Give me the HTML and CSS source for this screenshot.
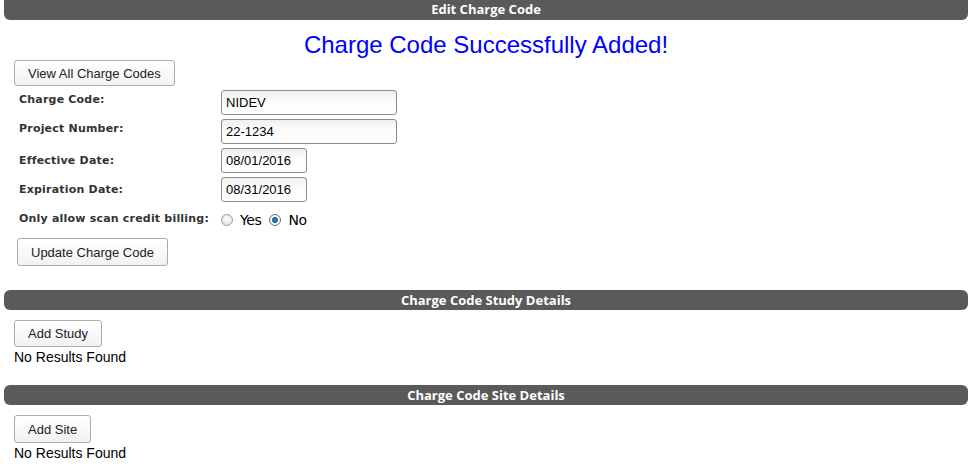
FILE: index.html
```html
<!DOCTYPE html>
<html>
<head>
<meta charset="utf-8">
<title>Edit Charge Code</title>
<link rel="stylesheet" href="styles.css">
</head>
<body>
  <div class="bar bar-top">Edit Charge Code</div>
  <h1 class="title">Charge Code Successfully Added!</h1>
  <button class="btn">View All Charge Codes</button>

  <div class="form">
    <label class="lbl lbl-top">Charge Code:</label>
    <input class="field" type="text" value="NIDEV">
    <label class="lbl lbl-top">Project Number:</label>
    <input class="field" type="text" value="22-1234">
    <label class="lbl">Effective Date:</label>
    <input class="field field-date" type="text" value="08/01/2016">
    <label class="lbl">Expiration Date:</label>
    <input class="field field-date" type="text" value="08/31/2016">
    <label class="lbl">Only allow scan credit billing:</label>
    <div class="radios">
      <label class="opt"><input class="radio" type="radio" name="scan"> Yes</label>
      <label class="opt"><input class="radio" type="radio" name="scan" checked> No</label>
    </div>
  </div>
  <button class="btn btn-update">Update Charge Code</button>

  <div class="bar bar-study">Charge Code Study Details</div>
  <button class="btn btn-sub">Add Study</button>
  <div class="empty">No Results Found</div>

  <div class="bar bar-site">Charge Code Site Details</div>
  <button class="btn btn-sub btn-site">Add Site</button>
  <div class="empty">No Results Found</div>
</body>
</html>
```
FILE: styles.css
```css
* { box-sizing: border-box; }

body {
  margin: 0;
  padding: 0 8px 0 4px;
  font-family: "Liberation Sans", Arial, sans-serif;
  font-size: 14px;
  color: #000;
  background: #fff;
}

.bar {
  height: 20px;
  line-height: 20px;
  background: #5a5a5a;
  border-radius: 6px;
  color: #fff;
  text-align: center;
  font-family: "Open Sans", "DejaVu Sans", sans-serif;
  font-weight: bold;
  font-size: 13px;
}

.bar-top {
  line-height: 19px;
  border-radius: 0 0 6px 6px;
}

.title {
  margin: 11px 0 1px;
  font-family: "Liberation Sans", Arial, sans-serif;
  font-weight: normal;
  font-size: 24px;
  line-height: 28px;
  color: #0000ff;
  text-align: center;
}

.btn {
  display: block;
  margin: 0 0 0 10px;
  height: 26px;
  padding: 0 13px;
  font-family: "Liberation Sans", Arial, sans-serif;
  font-size: 13px;
  color: #222;
  background: linear-gradient(#ffffff, #f2f2f2);
  border: 1px solid #acacac;
  border-radius: 3px;
}

.form {
  display: grid;
  grid-template-columns: 202px auto;
  row-gap: 4px;
  margin: 4px 0 0 15px;
  align-items: center;
}

.lbl {
  font-family: "DejaVu Sans", Verdana, sans-serif;
  font-weight: bold;
  font-size: 11px;
  letter-spacing: 0.2px;
  color: #333;
  align-self: center;
}

.lbl-top {
  align-self: start;
  padding-top: 3px;
}

.field {
  width: 176px;
  height: 25px;
  padding: 0 4px;
  font-family: "Liberation Sans", Tahoma, sans-serif;
  font-size: 13px;
  color: #000;
  border: 1px solid #8c8c8c;
  border-radius: 3px;
  background: linear-gradient(#efefeb, #fbfbfa 40%, #ffffff);
}

.field-date { width: 86px; }

.radios {
  display: flex;
  align-items: center;
  gap: 8px;
  height: 25px;
  padding-top: 3px;
}

.opt {
  display: flex;
  align-items: center;
  gap: 7px;
  font-family: "DejaVu Sans", Tahoma, sans-serif;
  font-size: 14px;
  letter-spacing: -0.4px;
}

.radio {
  -webkit-appearance: none;
  appearance: none;
  margin: 0;
  width: 12px;
  height: 12px;
  border-radius: 50%;
  border: 1px solid #a0a0a0;
  background: radial-gradient(circle at 50% 40%, #ffffff, #d6d6d6);
}

.radio:checked {
  background: radial-gradient(circle, #2a8fd8 0, #0c5da6 2.5px, #ffffff 3.5px, #e3e3e3 100%);
  border-color: #6d6d6d;
}

.btn-update {
  margin: 7px 0 0 13px;
  height: 28px;
}

.bar-study { margin-top: 24px; }

.btn-sub {
  margin-top: 10px;
  height: 27px;
}

.empty {
  margin: 1px 0 0 10px;
  line-height: 18px;
}

.bar-site { margin-top: 19px; }

.btn-site { height: 28px; }
```
